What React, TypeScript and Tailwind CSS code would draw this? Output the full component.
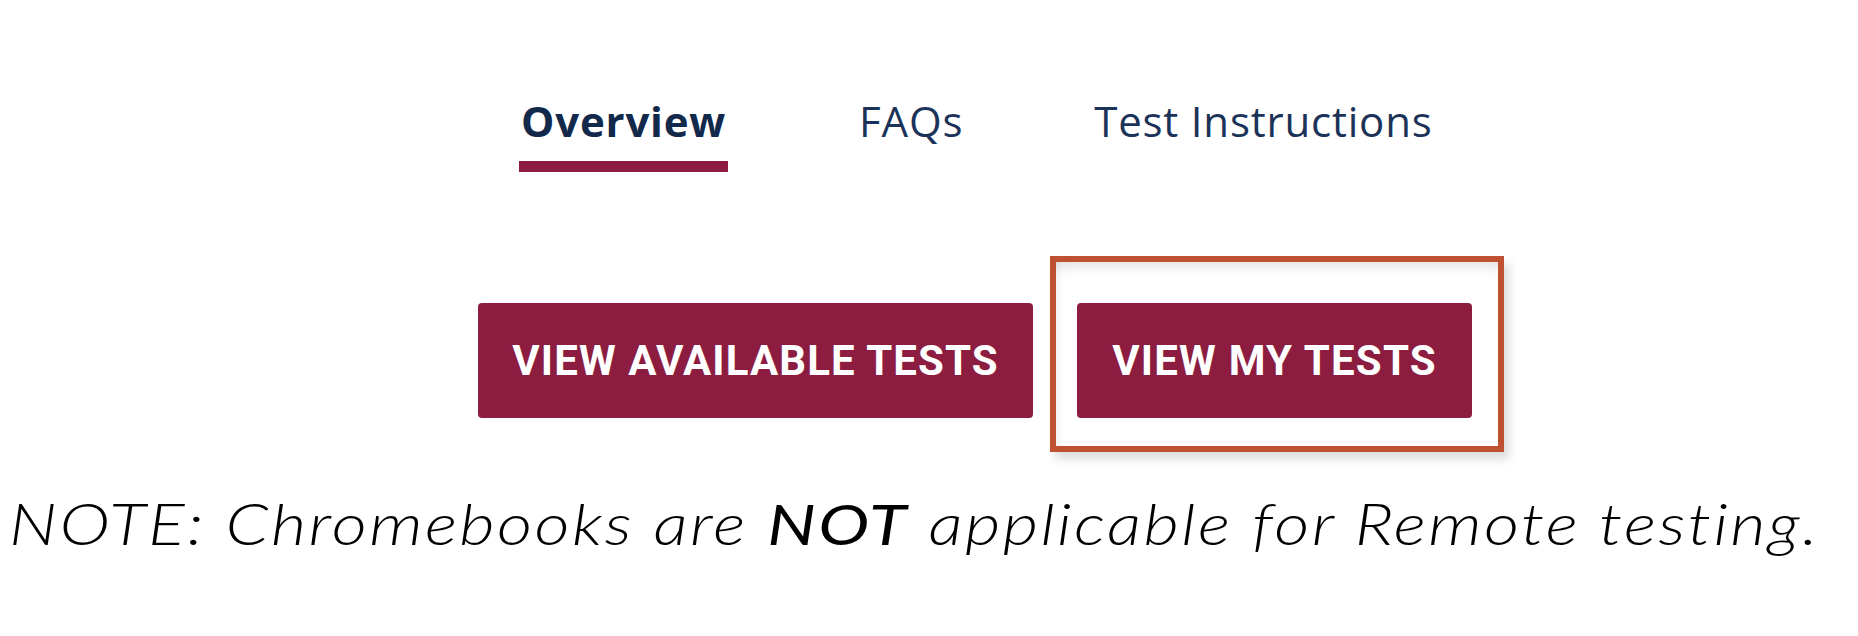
import React from "react";

export default function App() {
  return (
    <div className="w-[1858px] h-[636px] bg-white overflow-hidden flex flex-col">
      {/* Tabs */}
      <div className="flex pl-[519px] pt-[93px] gap-[131px] font-['Open_Sans',sans-serif] text-[42px] leading-[56px] tracking-[0.8px]">
        <div className="flex flex-col items-center">
          <span className="font-bold text-[#13294b] px-[2px]">Overview</span>
          <div className="mt-[12px] h-[11px] w-full bg-[#8c1d40]" />
        </div>
        <span className="text-[#1b3358]">FAQs</span>
        <span className="text-[#1b3358]">Test Instructions</span>
      </div>

      {/* Buttons */}
      <div className="flex pl-[478px] pt-[131px] gap-[44px] font-['Roboto',sans-serif]">
        <button className="w-[555px] h-[115px] rounded-[4px] bg-[#8c1d40] text-white font-bold text-[42px] uppercase tracking-[1.1px]">
          View Available Tests
        </button>
        <div className="relative">
          <div className="absolute left-[-27px] top-[-47px] w-[454px] h-[196px] border-[6px] border-[#bf5132] shadow-[inset_0_14px_12px_-8px_rgba(0,0,0,0.10),inset_10px_0_10px_-8px_rgba(0,0,0,0.08),5px_7px_9px_rgba(0,0,0,0.14)]" />
          <button className="relative w-[395px] h-[115px] rounded-[4px] bg-[#8c1d40] text-white font-bold text-[42px] uppercase tracking-[1.2px]">
            View My Tests
          </button>
        </div>
      </div>

      {/* Note */}
      <div className="pl-[9px] pt-[70px]">
        <p className="inline-block origin-left scale-x-[1.2] font-['Lato',sans-serif] italic font-light text-[57px] leading-[70px] tracking-[2px] text-black whitespace-nowrap">
          NOTE: Chromebooks are <span className="font-normal">NOT</span> applicable for Remote testing.
        </p>
      </div>
    </div>
  );
}
